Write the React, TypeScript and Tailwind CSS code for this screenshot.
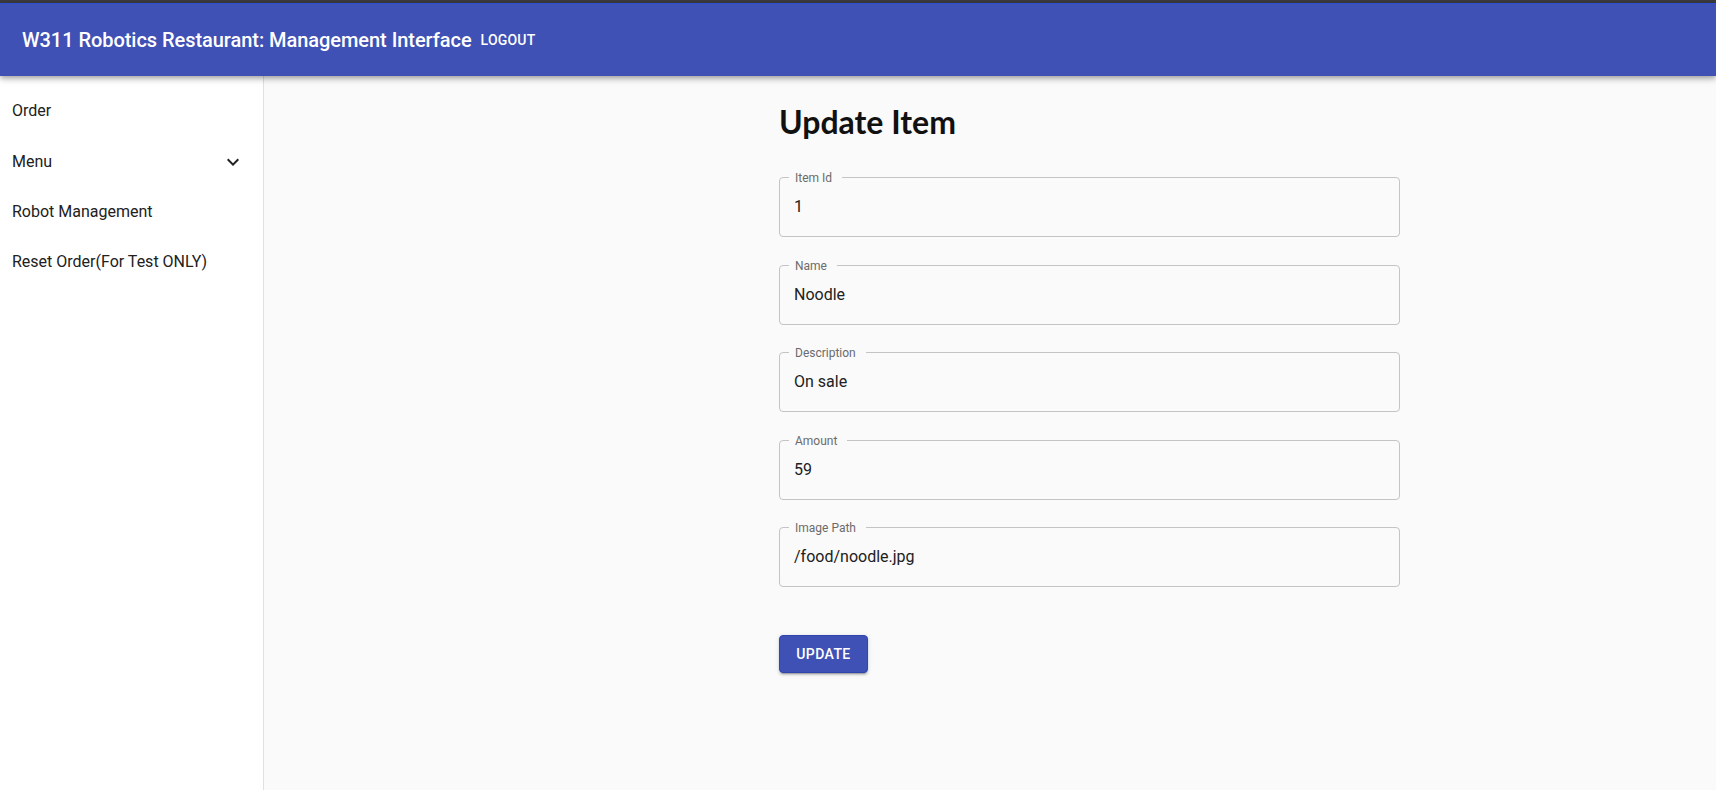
import React from "react";

const navItems = [
  { label: "Order" },
  { label: "Menu", expand: true },
  { label: "Robot Management" },
  { label: "Reset Order(For Test ONLY)" },
];

const fields = [
  { label: "Item Id", value: "1" },
  { label: "Name", value: "Noodle" },
  { label: "Description", value: "On sale" },
  { label: "Amount", value: "59" },
  { label: "Image Path", value: "/food/noodle.jpg" },
];

const ExpandMore = () => (
  <svg viewBox="0 0 24 24" className="w-[24px] h-[24px]" fill="currentColor">
    <path d="M16.59 8.59 12 13.17 7.41 8.59 6 10l6 6 6-6z" />
  </svg>
);

const OutlinedField = ({ label, value }: { label: string; value: string }) => (
  <div className="relative h-[60px] w-[621px] rounded-[4px] border border-[#c4c4c4] flex items-center px-[14px]">
    <span className="absolute left-[9px] top-0 -translate-y-1/2 bg-[#fafafa] pl-[6px] pr-[10px] text-[12px] leading-[14px] text-[#6b6b6b]">
      {label}
    </span>
    <span className="text-[16px] text-[#212121]">{value}</span>
  </div>
);

export default function App() {
  return (
    <div
      className="w-[1716px] h-[790px] flex flex-col bg-[#fafafa] overflow-hidden"
      style={{ fontFamily: "Roboto, 'Liberation Sans', sans-serif" }}
    >
      <div className="h-[3px] bg-[#3b3b3d] shrink-0" />
      <header className="relative z-10 h-[73px] shrink-0 bg-[#3f51b5] border-t border-[#2f4fd3] flex items-center pl-[22px] text-white shadow-[0_2px_4px_-1px_rgba(0,0,0,0.2),0_4px_5px_0_rgba(0,0,0,0.14),0_1px_10px_0_rgba(0,0,0,0.12)]">
        <h1 className="text-[20px] font-medium tracking-[-0.05px]">
          W311 Robotics Restaurant: Management Interface
        </h1>
        <button className="ml-[1px] px-[8px] py-[6px] text-[14px] font-medium uppercase tracking-[0.2px]">
          Logout
        </button>
      </header>

      <div className="flex flex-1 min-h-0">
        <aside className="w-[264px] shrink-0 bg-white border-r border-[#e0e0e0] pt-[10px]">
          {navItems.map((item) => (
            <div
              key={item.label}
              className="h-[50.4px] flex items-center justify-between pl-[12px] pr-[18px] text-[16px] text-[#212121]"
            >
              <span>{item.label}</span>
              {item.expand && <ExpandMore />}
            </div>
          ))}
        </aside>

        <main className="flex-1 pl-[515px] pt-[26px]">
          <h2
            className="text-[32px] leading-[40px] font-bold text-[#111111]"
            style={{ fontFamily: "Lato, 'Noto Sans', sans-serif" }}
          >
            Update Item
          </h2>
          <div className="mt-[35px] flex flex-col gap-[27.5px]">
            {fields.map((f) => (
              <OutlinedField key={f.label} label={f.label} value={f.value} />
            ))}
          </div>
          <button className="mt-[48px] w-[89px] h-[38px] rounded-[4px] bg-[#3f51b5] border border-[#2f45b0] text-white text-[14px] font-medium uppercase tracking-[0.4px] shadow-[0_3px_1px_-2px_rgba(0,0,0,0.2),0_2px_2px_0_rgba(0,0,0,0.14),0_1px_5px_0_rgba(0,0,0,0.12)]">
            Update
          </button>
        </main>
      </div>
    </div>
  );
}
